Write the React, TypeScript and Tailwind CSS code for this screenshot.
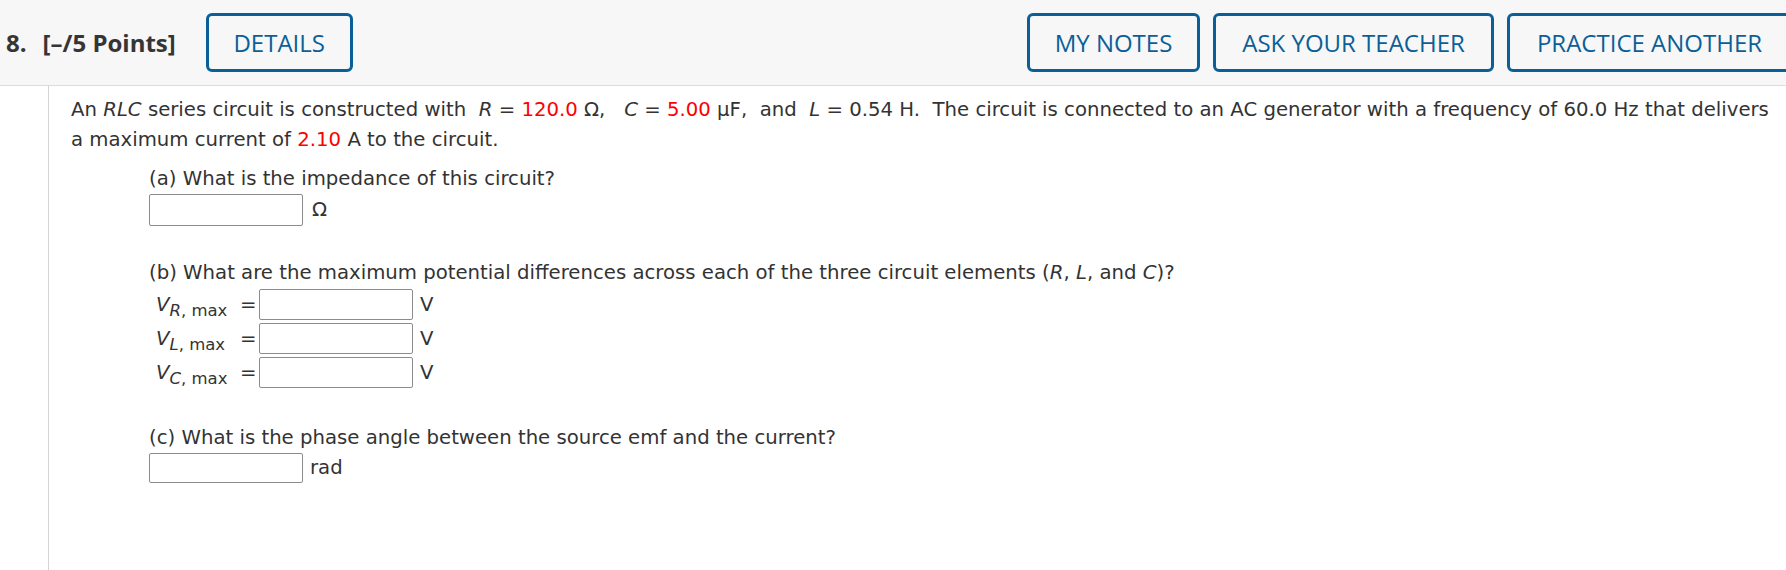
import type { ReactNode } from 'react'

function HeaderButton({ width, children }: { width: string; children: ReactNode }) {
  return (
    <button
      className={`${width} h-[59px] shrink-0 flex items-center justify-center border-[3px] border-[#0b5f98] rounded-[6px] text-[#0b5f98] text-[24px] leading-none`}
    >
      {children}
    </button>
  )
}

function Red({ children }: { children: ReactNode }) {
  return <span className="text-[#ff0000]">{children}</span>
}

function AnswerBox({ height = 'h-[31px]' }: { height?: string }) {
  return <div className={`w-[154px] ${height} shrink-0 border border-[#8c8c8c] rounded-[2px] bg-white`} />
}

function VoltageRow({ sub }: { sub: ReactNode }) {
  return (
    <div className="flex items-center h-[31px]">
      <div className="w-[91px] pl-[7px] whitespace-nowrap">
        <span className="italic">V</span>
        <sub className="text-[16.5px] -bottom-[5px]">{sub}</sub>
      </div>
      <span className="w-[19px]">=</span>
      <AnswerBox />
      <span className="ml-[7px]">V</span>
    </div>
  )
}

export default function App() {
  return (
    <div className="w-[1786px] h-[570px] overflow-hidden bg-white">
      {/* Question header */}
      <header className="h-[86px] bg-[#f7f7f7] border-b border-[#dcdcdc] overflow-hidden">
        <div className="w-[1792px] h-[85px] flex items-center pl-[6px] font-['Open_Sans',sans-serif]">
          <span className="text-[24px] font-bold text-[#353535]">8.</span>
          <span className="ml-[16px] text-[24px] font-bold text-[#353535]">[–/5 Points]</span>
          <div className="ml-[30px]">
            <HeaderButton width="w-[147px]">DETAILS</HeaderButton>
          </div>
          <div className="flex-1" />
          <div className="flex gap-[13px]">
            <HeaderButton width="w-[173px]">MY NOTES</HeaderButton>
            <HeaderButton width="w-[281px]">ASK YOUR TEACHER</HeaderButton>
            <HeaderButton width="w-[285px]">PRACTICE ANOTHER</HeaderButton>
          </div>
        </div>
      </header>

      {/* Question body */}
      <div className="flex h-[484px]">
        <div className="w-[49px] shrink-0 border-r border-[#d4d4d4]" />
        <div className="flex-1 pl-[22px] pt-[9px] text-[#333] text-[19.7px] leading-[30px] font-['DejaVu_Sans',Verdana,sans-serif]">
          <p className="whitespace-nowrap">
            An <i>RLC</i> series circuit is constructed with&nbsp; <i>R</i> = <Red>120.0</Red> Ω,&nbsp;&nbsp; <i>C</i> ={' '}
            <Red>5.00</Red> μF,&nbsp; and&nbsp; <i>L</i> = 0.54 H.&nbsp; The circuit is connected to an AC generator
            with a frequency of 60.0 Hz that delivers
            <br />a maximum current of <Red>2.10</Red> A to the circuit.
          </p>

          <div className="ml-[78px]">
            {/* (a) */}
            <div className="mt-[9px]">
              <div>(a) What is the impedance of this circuit?</div>
              <div className="flex items-center">
                <AnswerBox height="h-[32px]" />
                <span className="ml-[9px]">Ω</span>
              </div>
            </div>

            {/* (b) */}
            <div className="mt-[32px]">
              <div>
                (b) What are the maximum potential differences across each of the three circuit elements (<i>R</i>,{' '}
                <i>L</i>, and <i>C</i>)?
              </div>
              <div className="mt-[1px] flex flex-col gap-[3px]">
                <VoltageRow sub={<><i>R</i>, max</>} />
                <VoltageRow sub={<><i>L</i>, max</>} />
                <VoltageRow sub={<><i>C</i>, max</>} />
              </div>
            </div>

            {/* (c) */}
            <div className="mt-[35px]">
              <div>(c) What is the phase angle between the source emf and the current?</div>
              <div className="flex items-center">
                <AnswerBox height="h-[30px]" />
                <span className="ml-[7px]">rad</span>
              </div>
            </div>
          </div>
        </div>
      </div>
    </div>
  )
}
